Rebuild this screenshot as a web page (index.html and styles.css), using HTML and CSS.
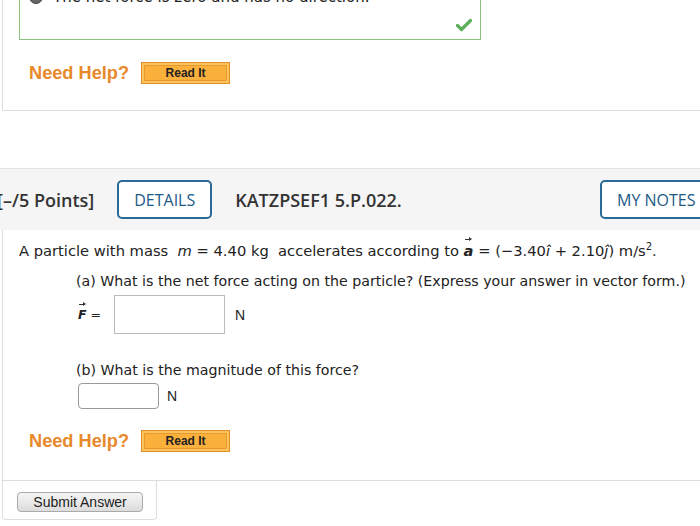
FILE: index.html
```html
<!DOCTYPE html>
<html lang="en">
<head>
  <meta charset="UTF-8">
  <title>KATZPSEF1 5.P.022</title>
  <link rel="stylesheet" href="styles.css">
</head>
<body>

  <div class="prev-card">
    <div class="answer-box">
      <div class="choice">
        <span class="radio"></span>
        <span>The net force is zero and has no direction.</span>
      </div>
      <div class="check-row">
        <svg width="16" height="14" viewBox="0 0 16 14">
          <path d="M1.5 7.5 L5.5 11.5 L14.5 2.5" fill="none" stroke="#5fae5b" stroke-width="3.2" stroke-linecap="round" stroke-linejoin="round"/>
        </svg>
      </div>
    </div>
    <div class="help">
      <span class="help-text">Need Help?</span>
      <button class="read-it">Read It</button>
    </div>
  </div>

  <div class="q-header">
    <span class="points">[–/5 Points]</span>
    <button class="outline-btn">DETAILS</button>
    <span class="q-id">KATZPSEF1 5.P.022.</span>
    <button class="outline-btn notes">MY NOTES</button>
  </div>

  <div class="q-body">
    <p class="prompt">A particle with mass&nbsp; <i>m</i> = 4.40 kg&nbsp; accelerates according to <b class="vec">a</b> = (−3.40<i class="hat">î</i> + 2.10<i class="hat">ĵ</i>) m/s<sup>2</sup>.</p>

    <div class="part">
      <p>(a) What is the net force acting on the particle? (Express your answer in vector form.)</p>
      <div class="answer-row">
        <span class="eq"><b class="vec">F</b> =</span>
        <span class="input big"></span>
        <span class="unit">N</span>
      </div>
    </div>

    <div class="part part-b">
      <p>(b) What is the magnitude of this force?</p>
      <div class="answer-row">
        <span class="input small"></span>
        <span class="unit">N</span>
      </div>
    </div>

    <div class="help help-b">
      <span class="help-text">Need Help?</span>
      <button class="read-it">Read It</button>
    </div>
  </div>

  <div class="submit-row">
    <div class="submit-box">
      <button class="submit">Submit Answer</button>
    </div>
  </div>

</body>
</html>
```

FILE: styles.css
```css
body {
  margin: 0;
  font-family: "DejaVu Sans", Verdana, sans-serif;
  color: #222;
  background: #fff;
  overflow: hidden;
}

p {
  margin: 0;
}

/* previous question card */
.prev-card {
  display: flow-root;
  margin-left: 2px;
  height: 110px;
  border-left: 1px solid #ddd;
  border-bottom: 1px solid #ddd;
}

.answer-box {
  margin: -22px 0 0 16px;
  width: 462px;
  height: 62px;
  border: 1px solid #8cc07c;
  display: flex;
  flex-direction: column;
  justify-content: space-between;
  box-sizing: border-box;
  padding: 9px 8px 7px 9px;
}

.choice {
  display: flex;
  align-items: center;
  gap: 10px;
  font-size: 15px;
}

.radio {
  width: 12px;
  height: 12px;
  border-radius: 50%;
  background: #666;
  border: 1px solid #444;
}

.check-row {
  display: flex;
  justify-content: flex-end;
}

.help {
  display: flex;
  align-items: center;
  gap: 12px;
  margin: 22px 0 0 26px;
}

.help-text {
  font-family: "Liberation Sans", Arial, sans-serif;
  font-weight: bold;
  font-size: 18.2px;
  color: #e8892b;
}

.read-it {
  width: 89px;
  height: 22px;
  padding: 0;
  font-family: "Liberation Sans", Arial, sans-serif;
  font-weight: bold;
  font-size: 12px;
  color: #222;
  background: #fbb03b;
  border: 1px solid #e58c2a;
  box-shadow: inset 0 0 0 2px #fbc45a, inset 0 0 0 3px #e89a30;
}

/* question header */
.q-header {
  margin-top: 57px;
  height: 61px;
  background: #f5f5f5;
  border-top: 1px solid #e3e3e3;
  display: flex;
  align-items: center;
  font-family: "Open Sans", sans-serif;
  font-size: 18px;
  color: #333;
}

.points {
  font-weight: 600;
  margin-left: -3px;
}

.q-id {
  font-weight: 600;
  margin-left: 23px;
}

.outline-btn {
  margin-left: 23px;
  height: 39px;
  width: 95px;
  padding: 0;
  font-family: "Open Sans", sans-serif;
  font-size: 16px;
  color: #1d5a86;
  background: #fff;
  border: 2px solid #2a6a96;
  border-radius: 5px;
}

.notes {
  margin-left: auto;
  margin-right: -18px;
  width: 118px;
  text-align: left;
  padding-left: 15px;
}

/* question body */
.q-body {
  margin-left: 2px;
  height: 251px;
  border-left: 1px solid #ddd;
  border-bottom: 1px solid #ddd;
  padding: 12px 0 0 16px;
  box-sizing: border-box;
  font-size: 14.2px;
}

.prompt {
  font-size: 14.7px;
  line-height: 18px;
}

.vec {
  position: relative;
  font-style: italic;
}

.vec::before {
  content: "";
  position: absolute;
  left: 1px;
  top: -3px;
  width: 6px;
  height: 1px;
  background: #333;
}

.vec::after {
  content: "";
  position: absolute;
  left: 5px;
  top: -5px;
  border-left: 3px solid #333;
  border-top: 2.5px solid transparent;
  border-bottom: 2.5px solid transparent;
}

.hat {
  font-style: italic;
}

sup {
  font-size: 10px;
  line-height: 0;
}

.part {
  margin: 13px 0 0 57px;
}

.answer-row {
  display: flex;
  align-items: center;
  margin-top: 6px;
  font-size: 12.5px;
}

.eq {
  margin-left: 2px;
  width: 36px;
}

.input {
  display: inline-block;
  border: 1px solid #bbb;
  background: #fff;
  box-sizing: border-box;
}

.input.big {
  width: 111px;
  height: 39px;
}

.input.small {
  width: 81px;
  height: 26px;
  margin-left: 2px;
  border-color: #999;
  border-radius: 4px;
}

.unit {
  margin-left: 10px;
  font-family: "Liberation Sans", Arial, sans-serif;
  font-size: 14px;
}

.part-b {
  margin-top: 28px;
}

.part-b .answer-row {
  margin-top: 5px;
}

.part-b .unit {
  margin-left: 8px;
}

.help-b {
  margin: 21px 0 0 10px;
}

/* submit area */
.submit-row {
  display: flex;
}

.submit-box {
  margin-left: 2px;
  width: 155px;
  height: 39px;
  border: 1px solid #ddd;
  border-top: none;
  border-radius: 0 0 4px 4px;
  box-sizing: border-box;
  padding: 11px 0 0 14px;
}

.submit {
  width: 126px;
  height: 20px;
  padding: 0;
  font-family: "Liberation Sans", Arial, sans-serif;
  font-size: 14px;
  color: #222;
  background: linear-gradient(#f6f6f6, #dcdcdc);
  border: 1px solid #aaa;
  border-radius: 4px;
}
```
